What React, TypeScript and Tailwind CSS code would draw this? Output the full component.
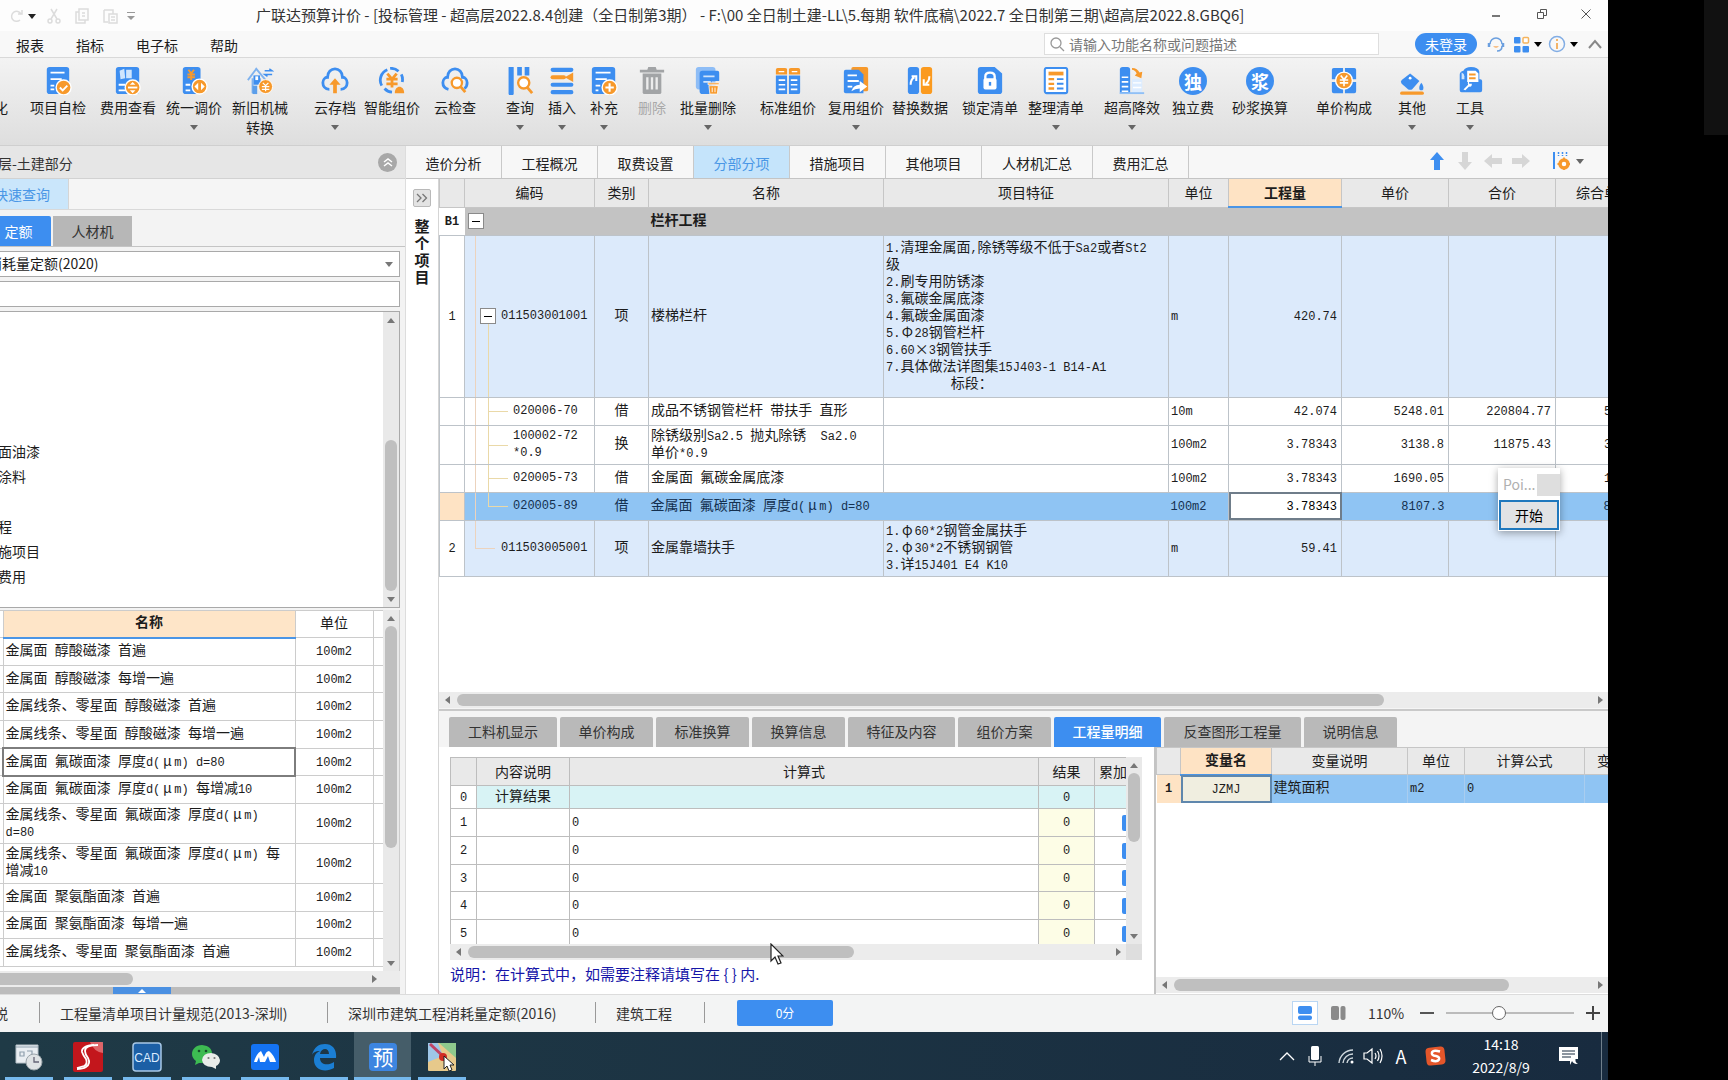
import React from "react";
import { clsx } from "clsx";

const B = "#3d8ef0";
const O = "#f7992b";

/* ---------- shared text and scroll bar pieces ---------- */

function Mixed({ text }: { text: string }) {
  const parts = text.split(/([\x20-\x7e]+|[μφΦ])/).filter(Boolean);
  return (
    <>
      {parts.map((p, i) =>
        /^[μφΦ]/.test(p) ? (
          <span key={i} className="inline-block w-3.5 text-center">
            {p}
          </span>
        ) : /^[\x20-\x7e]/.test(p) ? (
          <span key={i} className="font-['Liberation_Mono',monospace] text-xs leading-none">
            {p}
          </span>
        ) : (
          p
        ),
      )}
    </>
  );
}

function Tri({ dir, className }: { dir: "up" | "down" | "left" | "right"; className?: string }) {
  const d = {
    up: "M0 7 4 2l4 5z",
    down: "M0 2l4 5 4-5z",
    left: "M7 0 2 4l5 4z",
    right: "M2 0l5 4-5 4z",
  }[dir];
  return (
    <svg viewBox="0 0 8 8" className={clsx("size-2 shrink-0", className)} fill="currentColor" aria-hidden="true">
      <path d={d} />
    </svg>
  );
}

function HBar({ thumb, className }: { thumb: string; className?: string }) {
  return (
    <div className={clsx("flex h-4 shrink-0 items-center gap-1 bg-[#ececec] px-1 text-[#777]", className)}>
      <Tri dir="left" />
      <div className="flex h-full flex-1 items-center px-0.5">
        <div className={clsx("h-3 rounded-full bg-[#bfbfbf]", thumb)} />
      </div>
      <Tri dir="right" />
    </div>
  );
}

function VBar({ thumb, className }: { thumb: string; className?: string }) {
  return (
    <div className={clsx("flex shrink-0 flex-col items-center bg-[#e9e9e9] py-1 text-[#777]", className)}>
      <Tri dir="up" />
      <div className="flex w-full flex-1 flex-col items-center py-1">
        <div className={clsx("w-3 rounded-full bg-[#bfbfbf]", thumb)} />
      </div>
      <Tri dir="down" />
    </div>
  );
}

/* ---------- ribbon icons ---------- */

const icons: Record<string, React.ReactNode> = {
  check: (
    <>
      <rect x="2" y="0" width="24" height="29" rx="3" fill={B} />
      <path d="M6 6h15M6 13h12M6 20h4M6 24h4" stroke="#fff" strokeWidth="2" />
      <circle cx="20" cy="22" r="8" fill={O} stroke="#fff" strokeWidth="1.5" />
      <path d="M16 22l3 3 5-5" stroke="#fff" strokeWidth="2" fill="none" />
    </>
  ),
  fee: (
    <>
      <rect x="1" y="0" width="25" height="29" rx="3" fill={B} />
      <path d="M5 4l5-2 1 10-5 1zM12 3h6v9h-6z" fill="#cfe5fd" />
      <path d="M4 19h7M4 25h7" stroke="#fff" strokeWidth="2" />
      <circle cx="19" cy="22" r="8" fill={O} stroke="#fff" strokeWidth="1.5" />
      <path d="M14 22h10" stroke="#fff" strokeWidth="2" />
      <path d="M16 19l3-3 3 3zM16 25l3 3 3-3z" fill="#fff" />
    </>
  ),
  price: (
    <>
      <rect x="2" y="0" width="19" height="29" rx="3" fill={B} />
      <path d="M8 3l3 4 3-4M7 8h8M7 11h8M11 7v7" stroke={O} strokeWidth="2" fill="none" />
      <path d="M5 19h5M5 25h5" stroke="#fff" strokeWidth="2" />
      <circle cx="20" cy="21" r="8" fill={O} stroke="#fff" strokeWidth="1.5" />
      <path d="M18.500 17v8l-4-4zM21.500 17v8l4-4z" fill="#fff" />
    </>
  ),
  machine: (
    <>
      <path d="M1 14L10 2l10 12M6 12v16M14 12v6" stroke="#7fb2ee" strokeWidth="2" fill="none" />
      <path d="M7 9h7v10H7z" fill={B} />
      <path d="M9 10h3v4H9z" fill="#fff" />
      <path d="M6 20h5v9H6z" fill="#5b9eea" />
      <path d="M19 4h8l-3-2M27 8h-8l3 2" stroke={B} strokeWidth="1.500" fill="none" />
      <circle cx="20" cy="21" r="7.500" fill={O} stroke="#fff" strokeWidth="1" />
      <path d="M17 17l3 3 3-3M16 21h8M16 24h8M20 20v6" stroke="#fff" strokeWidth="1.300" fill="none" />
    </>
  ),
  cloudUp: (
    <>
      <path d="M8 24C3 24 1 20 1 17s2-6 5-6C6 5 10 2 14 2s8 3 8 9c3 0 5 3 5 6s-2 7-7 7" stroke={B} strokeWidth="3" fill="none" />
      <path d="M14 12l6 7h-4v9h-4v-9H8z" fill={O} />
    </>
  ),
  smart: (
    <>
      <path d="M9 3a12 12 0 0 0-6 17M12 1.500a12 12 0 0 1 9 3M24 8a12 12 0 0 1 1 8M6 23a12 12 0 0 0 8 4" stroke={B} strokeWidth="3" fill="none" />
      <path d="M9 7l5 6 5-6M8 13h12M8 18h12M14 12v10" stroke={O} strokeWidth="3" fill="none" />
      <path d="M17 28c0-9 10-9 10 0z" fill={O} />
    </>
  ),
  cloudFind: (
    <>
      <path d="M7 24C3 23 1 20 1 17s2-6 5-6C6 5 10 2 14 2s8 3 8 9c3 0 5 3 5 6 0 2-1 5-3 6" stroke={B} strokeWidth="3" fill="none" />
      <circle cx="16" cy="17" r="5.500" fill="#fff" stroke={O} strokeWidth="2.500" />
      <path d="M20 21l5 6" stroke={O} strokeWidth="3" />
    </>
  ),
  query: (
    <>
      <path d="M4.500 1v27" stroke={B} strokeWidth="5.500" strokeLinecap="round" />
      <path d="M11 0h5v9h-5zM19 0h5v9h-5z" fill={B} />
      <circle cx="18" cy="17" r="6" fill="#fff" stroke={O} strokeWidth="2.500" />
      <path d="M22 22l5 6" stroke={O} strokeWidth="3" />
    </>
  ),
  insert: (
    <>
      <path d="M4 3h20M4 19h20M4 27h20" stroke={B} strokeWidth="4.500" strokeLinecap="round" />
      <path d="M4 11h12" stroke={O} strokeWidth="4.500" strokeLinecap="round" />
      <path d="M17 11l9-5v10z" fill={O} />
    </>
  ),
  supplement: (
    <>
      <rect x="1" y="0" width="25" height="29" rx="3" fill={B} />
      <path d="M5 6h16M5 13h12M5 20h5M5 25h3" stroke="#fff" strokeWidth="2" />
      <circle cx="20" cy="22" r="8" fill={O} stroke="#fff" strokeWidth="1.500" />
      <path d="M15.500 22h9M20 17.500v9" stroke="#fff" strokeWidth="2.200" />
    </>
  ),
  trash: (
    <>
      <path d="M1 3h8l1-3h8l1 3h8v3H1z" fill="#a2a4a6" />
      <path d="M4 7h20v20q0 2-2 2H6q-2 0-2-2z" fill="#a2a4a6" />
      <path d="M9 11v13M14 11v13M19 11v13" stroke="#ececec" strokeWidth="2.500" />
    </>
  ),
  batch: (
    <>
      <rect x="1" y="0" width="21" height="24" rx="3" fill="#8ebdf6" />
      <path d="M8 4h16q2 0 2 2v9h-8v14H8q-3 0-3-3V7q0-3 3-3z" fill={B} />
      <path d="M9 10h12M9 16h8" stroke="#cfe3fb" strokeWidth="2" />
      <path d="M14 17h12v2H14zM15 20h10l-1 9h-8z" fill={O} stroke="#fff" strokeWidth="0.800" />
      <path d="M18.500 22v5M21.500 22v5" stroke="#fff" strokeWidth="1" />
    </>
  ),
  standard: (
    <>
      <path d="M1 8V3q0-2 2-2h8l2 1v6zM15 8V2l2-1h8q2 0 2 2v5z" fill={O} />
      <path d="M4 5h6M18 5h6" stroke="#fff" strokeWidth="1.500" />
      <path d="M1 9h12v20H3q-2 0-2-2zM15 9h12v18q0 2-2 2H15z" fill={B} />
      <path d="M4 14h7M4 19h7M4 24h7M17 14h7M17 19h7M17 24h7" stroke="#fff" strokeWidth="1.800" />
    </>
  ),
  reuse: (
    <>
      <rect x="9" y="0" width="18" height="26" rx="2" fill={O} />
      <path d="M3 3h14l5 5v20H3q-2 0-2-2V5q0-2 2-2z" fill={B} />
      <path d="M5 9h10M5 15h12M5 21h5" stroke="#fff" strokeWidth="2" />
      <path d="M9 26q2-7 9-7v-4l8 6-8 6v-4q-5 0-9 3z" fill="#fff" />
    </>
  ),
  replace: (
    <>
      <rect x="1" y="0" width="12" height="29" rx="3" fill={B} />
      <rect x="15" y="0" width="12" height="29" rx="3" fill="#fb9a1e" />
      <path d="M4 19q0-6 4-8M5 10h5v5M24 10q0 6-4 8M18 13v6h6" stroke="#fff" strokeWidth="2.200" fill="none" />
    </>
  ),
  lock: (
    <>
      <path d="M4 0h15l8 7v19q0 3-3 3H4q-3 0-3-3V3q0-3 3-3z" fill={B} />
      <path d="M9 13v-3q0-4 5-4t5 4v3" stroke="#fff" strokeWidth="2.500" fill="none" />
      <rect x="7" y="12" width="14" height="12" rx="2" fill="#fff" />
      <path d="M14 16v4" stroke={B} strokeWidth="2.500" />
    </>
  ),
  arrange: (
    <>
      <rect x="2" y="1" width="24" height="27" rx="2" fill="#fff" stroke={B} strokeWidth="2.200" />
      <path d="M6 5h16v4H6z" fill={O} />
      <path d="M6 13h6M6 18h6M6 23h6" stroke={O} strokeWidth="2.500" />
      <path d="M15 13h7M15 18h7M15 23h7" stroke={B} strokeWidth="2" />
    </>
  ),
  tall: (
    <>
      <path d="M1 29V3q0-3 3-3h5q3 0 3 3v26z" fill={B} />
      <path d="M3 11h7M3 16h7M3 21h7M3 26h7" stroke="#fff" strokeWidth="1.800" />
      <path d="M14 13h11v14H14z" fill="#dcecff" />
      <path d="M15 17h9M15 22h9" stroke="#fff" strokeWidth="1.500" />
      <path d="M1 28h26" stroke="#8fc0f7" strokeWidth="2" />
      <path d="M14 1q6 0 8 5l3-1-1 7-7-3 2-2q-2-4-5-4z" fill={O} />
    </>
  ),
  compose: (
    <>
      <path d="M3 1h10v12H1V3q0-2 2-2zM15 1h10q2 0 2 2v10H15zM1 16h12v12H3q-2 0-2-2zM15 16h12v10q0 2-2 2H15z" fill={B} />
      <circle cx="14" cy="14.500" r="9" fill={O} stroke="#fff" strokeWidth="1.500" />
      <path d="M10.500 9l3.500 4.500L17.500 9M9.500 14h9M9.500 17h9M14 13.500v7" stroke="#fff" strokeWidth="1.700" fill="none" />
    </>
  ),
  other: (
    <>
      <path d="M12 7l10 8-8 9q-2 1-4 0L3 18q-2-2 0-4z" fill={B} />
      <circle cx="12" cy="12" r="1.500" fill="#fff" />
      <path d="M24 17q3 4 2 7-2 2-4 0-1-3 2-7z" fill={B} />
      <path d="M3 28h22" stroke={O} strokeWidth="3.500" strokeLinecap="round" />
    </>
  ),
  tool: (
    <>
      <path d="M5 27q-2 0-2-2V8q0-3 4-4 2-4 8-4 8 0 9 5v8h1q2 0 2 2v10q0 2-2 2z" fill={B} />
      <path d="M11 4h9l3 3v9H11z" fill="#fff" />
      <path d="M13 8h7M13 12h7" stroke={O} strokeWidth="2" />
      <path d="M5 6q3 1 3 4v3H5z" fill="#cfe5fd" />
      <path d="M7 24l5-5q-1-3 1-4v3h3q0 4-3 3l-4 4z" fill="#fff" />
    </>
  ),
};

type Tool = { label: string[]; icon: string; cls: string; drop?: boolean; glyph?: string; off?: boolean };

const tools: Tool[] = [
  { label: ["项目自检"], icon: "check", cls: "ml-5 w-[60px]" },
  { label: ["费用查看"], icon: "fee", cls: "ml-2.5 w-[60px]" },
  { label: ["统一调价"], icon: "price", cls: "ml-1.5 w-[60px]", drop: true },
  { label: ["新旧机械", "转换"], icon: "machine", cls: "ml-1.5 w-[60px]" },
  { label: ["云存档"], icon: "cloudUp", cls: "ml-[22px] w-[46px]", drop: true },
  { label: ["智能组价"], icon: "smart", cls: "ml-1 w-[60px]" },
  { label: ["云检查"], icon: "cloudFind", cls: "ml-2.5 w-[46px]" },
  { label: ["查询"], icon: "query", cls: "ml-[26px] w-8", drop: true },
  { label: ["插入"], icon: "insert", cls: "ml-2.5 w-8", drop: true },
  { label: ["补充"], icon: "supplement", cls: "ml-2.5 w-8", drop: true },
  { label: ["删除"], icon: "trash", cls: "ml-4 w-8", off: true },
  { label: ["批量删除"], icon: "batch", cls: "ml-2.5 w-[60px]", drop: true },
  { label: ["标准组价"], icon: "standard", cls: "ml-5 w-[60px]" },
  { label: ["复用组价"], icon: "reuse", cls: "ml-2 w-[60px]", drop: true },
  { label: ["替换数据"], icon: "replace", cls: "ml-1 w-[60px]" },
  { label: ["锁定清单"], icon: "lock", cls: "ml-2.5 w-[60px]" },
  { label: ["整理清单"], icon: "arrange", cls: "ml-1.5 w-[60px]", drop: true },
  { label: ["超高降效"], icon: "tall", cls: "ml-4 w-[60px]", drop: true },
  { label: ["独立费"], icon: "", glyph: "独", cls: "ml-2 w-[46px]" },
  { label: ["砂浆换算"], icon: "", glyph: "浆", cls: "ml-3.5 w-[60px]" },
  { label: ["单价构成"], icon: "compose", cls: "ml-6 w-[60px]" },
  { label: ["其他"], icon: "other", cls: "ml-[22px] w-8", drop: true },
  { label: ["工具"], icon: "tool", cls: "ml-[26px] w-8", drop: true },
];

function Ribbon() {
  return (
    <div className="flex h-[88px] shrink-0 overflow-hidden border-b border-[#cfcfcf] bg-linear-to-b from-[#f3f3f3] to-[#dedede] pt-[9px]">
      <div className="mt-[30px] flex w-2 shrink-0 justify-end overflow-hidden text-sm leading-5 whitespace-nowrap">化</div>
      {tools.map((t) => (
        <button
          key={t.label[0]}
          type="button"
          disabled={t.off}
          className={clsx("flex shrink-0 flex-col items-center text-sm leading-5 whitespace-nowrap disabled:text-[#a9a9a9]", t.cls)}
        >
          {t.glyph ? (
            <span className="flex size-7 shrink-0 items-center justify-center rounded-full bg-[#3d8ef0] text-lg leading-none font-bold text-white">
              {t.glyph}
            </span>
          ) : (
            <svg viewBox="0 0 28 30" className="h-7 w-7 shrink-0" aria-hidden="true">
              {icons[t.icon]}
            </svg>
          )}
          <span className="mt-0.5">
            {t.label.map((l) => (
              <span key={l} className="block">
                {l}
              </span>
            ))}
          </span>
          {t.drop && <Tri dir="down" className="mt-1.5 text-[#666]" />}
        </button>
      ))}
    </div>
  );
}

/* ---------- window title and menu ---------- */

function TitleBar() {
  return (
    <header className="flex h-[31px] shrink-0 items-center bg-[#fdfdfd]">
      <div className="flex w-64 shrink-0 items-center pl-2 text-[#dcdcdc]">
        <svg viewBox="0 0 16 16" className="size-4" fill="none" stroke="currentColor" strokeWidth="1.500">
          <path d="M12 12a5 5 0 1 1 1-6M14 2v4h-4" />
        </svg>
        <Tri dir="down" className="ml-1 text-[#222]" />
        <svg viewBox="0 0 16 16" className="ml-2.5 size-4" fill="none" stroke="currentColor" strokeWidth="1.500">
          <circle cx="4" cy="13" r="2" />
          <circle cx="12" cy="13" r="2" />
          <path d="M5 11l6-10M11 11L5 1" />
        </svg>
        <svg viewBox="0 0 16 16" className="ml-3 size-4" fill="none" stroke="currentColor" strokeWidth="1.500">
          <path d="M5 1h9v11H5zM5 4H2v11h9v-3M8 5h3M8 8h3" />
        </svg>
        <svg viewBox="0 0 16 16" className="ml-3 size-4" fill="none" stroke="currentColor" strokeWidth="1.500">
          <path d="M2 2h9v4M2 2v12h4M7 6h8v9H7zM9 9h4M9 12h4" />
        </svg>
        <svg viewBox="0 0 10 10" className="ml-2 size-2.5" fill="#999">
          <path d="M1 1h8v1H1zM1 5h8L5 9z" />
        </svg>
      </div>
      <h1 className="text-[15px] whitespace-pre text-[#333]">
        广联达预算计价 - [投标管理 - 超高层2022.8.4创建（全日制第3期） - F:\00 全日制土建-LL\5.每期 软件底稿\2022.7 全日制第三期\超高层2022.8.GBQ6]
      </h1>
      <div className="ml-auto flex items-center pr-4 pb-1 text-[#555]">
        <button type="button" aria-label="最小化" className="mt-1 h-0.5 w-2 bg-[#777]" />
        <button type="button" aria-label="还原" className="ml-9">
          <svg viewBox="0 0 12 12" className="size-3" fill="none" stroke="currentColor">
            <path d="M1.500 4.500h6v6h-6zM4.500 4.500v-3h6v6h-3" />
          </svg>
        </button>
        <button type="button" aria-label="关闭" className="ml-8">
          <svg viewBox="0 0 12 12" className="size-3" fill="none" stroke="currentColor">
            <path d="M1.500 1.500l9 9M10.500 1.500l-9 9" />
          </svg>
        </button>
      </div>
    </header>
  );
}

function MenuBar() {
  return (
    <nav className="flex h-[27px] shrink-0 items-center border-b border-[#d9d9d9] bg-[#f8f8f8] text-sm">
      <div className="flex gap-8 pt-0.5 pl-4">
        {["报表", "指标", "电子标", "帮助"].map((m) => (
          <button key={m} type="button" className="leading-5 whitespace-nowrap">
            {m}
          </button>
        ))}
      </div>
      <label className="ml-auto flex h-[22px] w-[335px] items-center border border-[#dedede] bg-white px-1">
        <svg viewBox="0 0 16 16" className="size-4 shrink-0" fill="none" stroke="#999" strokeWidth="1.300">
          <circle cx="7" cy="7" r="5" />
          <path d="M11 11l4 4" />
        </svg>
        <input
          aria-label="搜索功能"
          placeholder="请输入功能名称或问题描述"
          className="ml-1 w-full bg-transparent text-sm leading-5 outline-none placeholder:text-[#777]"
        />
      </label>
      <button type="button" className="ml-9 h-[22px] w-[62px] rounded-full bg-[#3d8ef0] text-sm leading-5 text-white">
        未登录
      </button>
      <svg viewBox="0 0 18 18" className="ml-2.5 size-[18px]" fill="none" stroke="#6b9fdf" strokeWidth="1.500">
        <path d="M3 9a6 6 0 0 1 12 0M15 11q0 5-5 5" />
        <path d="M2 8v4M16 8v4" strokeWidth="2.500" />
        <path d="M6 11h6q-3 4-6 0z" fill="#f8c18a" stroke="none" />
      </svg>
      <svg viewBox="0 0 17 17" className="ml-2 size-[17px]" fill={B}>
        <rect x="1" y="1" width="6.500" height="6.500" rx="1" />
        <rect x="10" y="1.500" width="5.500" height="5.500" rx="1" fill="#fff" stroke="#f5b45e" strokeWidth="1.500" />
        <rect x="1" y="10" width="6.500" height="6.500" rx="1" />
        <rect x="9.500" y="10" width="6.500" height="6.500" rx="1" />
      </svg>
      <Tri dir="down" className="ml-1 text-black" />
      <svg viewBox="0 0 18 18" className="ml-1.5 size-[18px]" fill="none" stroke="#82ade4" strokeWidth="1.500">
        <circle cx="9" cy="9" r="7.500" />
        <path d="M9 4v2M9 8v6" stroke="#f3b469" strokeWidth="2" />
      </svg>
      <Tri dir="down" className="ml-1 text-black" />
      <svg viewBox="0 0 14 10" className="mr-1.5 ml-2.5 h-2.5 w-3.5" fill="none" stroke="#888" strokeWidth="2">
        <path d="M1 9l6-7 6 7" />
      </svg>
    </nav>
  );
}

/* ---------- left quota browser ---------- */

const quotaRows: [string, string][] = [
  ["金属面 醇酸磁漆 首遍", "h-[27px]"],
  ["金属面 醇酸磁漆 每增一遍", "h-[27px]"],
  ["金属线条、零星面 醇酸磁漆 首遍", "h-[27px]"],
  ["金属线条、零星面 醇酸磁漆 每增一遍", "h-[27px]"],
  ["金属面 氟碳面漆 厚度d(μm) d=80", "h-[27px]"],
  ["金属面 氟碳面漆 厚度d(μm) 每增减10", "h-[27px]"],
  ["金属线条、零星面 氟碳面漆 厚度d(μm)\nd=80", "h-[39px]"],
  ["金属线条、零星面 氟碳面漆 厚度d(μm) 每\n增减10", "h-[39px]"],
  ["金属面 聚氨酯面漆 首遍", "h-[27px]"],
  ["金属面 聚氨酯面漆 每增一遍", "h-[27px]"],
  ["金属线条、零星面 聚氨酯面漆 首遍", "h-[27px]"],
];

function LeftPanel() {
  const tree = ["", "", "", "", "", "面油漆", "涂料", "", "程", "施项目", "费用"];
  return (
    <aside className="flex w-[406px] shrink-0 flex-col border-r border-[#ddd] bg-[#f3f3f3]">
      <div className="flex h-[33px] shrink-0 items-center justify-between border-b border-[#d2d2d2] bg-[#e6e6e6] pr-2">
        <div className="overflow-hidden">
          <span className="-ml-0.5 text-sm whitespace-nowrap text-[#333]">层-土建部分</span>
        </div>
        <button type="button" aria-label="收起" className="flex size-[19px] items-center justify-center rounded-full bg-[#a8a8a8]">
          <svg viewBox="0 0 10 10" className="size-2.5" fill="none" stroke="#fff" strokeWidth="1.500">
            <path d="M1 5l4-3 4 3M1 9l4-3 4 3" />
          </svg>
        </button>
      </div>
      <div className="flex h-[31px] shrink-0 border-b border-[#d9d9d9] bg-[#f5f5f5]">
        <button type="button" className="flex w-[69px] items-center overflow-hidden border-r border-[#d5d5d5] bg-[#cae6fb] text-sm text-[#4a97e6]">
          <span className="-ml-1.5 whitespace-nowrap">快速查询</span>
        </button>
      </div>
      <div className="flex h-[37px] shrink-0 items-end gap-0.5 border-b border-[#c4c4c4] text-sm">
        <button type="button" className="h-[30px] w-[51px] rounded-tr-xs bg-[#3d8ef0] pr-3.5 text-sm text-white">
          定额
        </button>
        <button type="button" className="h-[30px] w-[79px] bg-[#b7b7b7] text-sm text-[#333]">
          人材机
        </button>
      </div>
      <div className="flex min-h-0 flex-1 flex-col pr-[5px]">
        <div className="relative mt-1 h-[26px] shrink-0 overflow-hidden border border-l-0 border-[#a9a9a9] bg-white">
          <select aria-label="定额库" className="-ml-3 block h-full w-full appearance-none bg-transparent pb-0.5 text-sm leading-5 outline-none">
            <option>消耗量定额(2020)</option>
          </select>
          <Tri dir="down" className="pointer-events-none absolute top-2 right-1.5 text-[#777]" />
        </div>
        <input aria-label="查询条件" className="mt-1 h-[26px] shrink-0 border border-l-0 border-[#a9a9a9] bg-white px-2 text-sm outline-none" />
        <div className="mt-1 flex h-[297px] shrink-0 border border-l-0 border-[#a9a9a9] bg-white">
          <ul className="flex-1 overflow-hidden pt-px text-sm">
            {tree.map((t, i) => (
              <li key={i} className="flex h-[25px] items-center">
                <span className="-ml-0.5">{t}</span>
              </li>
            ))}
          </ul>
          <VBar thumb="mt-auto h-[151px]" className="w-4" />
        </div>
        <div className="mt-0.5 flex h-[361px] shrink-0 border-r border-[#ccc] bg-white">
          <div className="min-w-0 flex-1 overflow-hidden">
            <table className="h-[357px] w-full table-fixed border-collapse text-sm leading-[17px] [&_td]:pb-1 [&_th]:pb-1">
              <colgroup>
                <col className="w-[3px]" />
                <col />
                <col className="w-[78px]" />
                <col className="w-2.5" />
              </colgroup>
              <thead>
                <tr className="h-[27px]">
                  <td className="border border-l-0 border-[#ccc]" />
                  <th className="border border-b-2 border-[#ccc] border-b-[#4a95e6] bg-[#fee5c8] font-bold">名称</th>
                  <th className="border border-[#ccc] font-normal">单位</th>
                  <td className="border border-r-0 border-[#ccc]" />
                </tr>
              </thead>
              <tbody>
                {quotaRows.map(([name, h], i) => (
                  <tr key={name} className={h}>
                    <td className="border border-l-0 border-[#ccc]" />
                    <td
                      className={clsx(
                        "border border-[#ccc] pl-0.5 whitespace-pre",
                        i === 4 && "outline-2 -outline-offset-1 outline-[#7d7d7d]",
                      )}
                    >
                      <Mixed text={name} />
                    </td>
                    <td className="border border-[#ccc] text-center">
                      <Mixed text="100m2" />
                    </td>
                    <td className="border border-r-0 border-[#ccc]" />
                  </tr>
                ))}
              </tbody>
            </table>
          </div>
          <VBar thumb="h-[222px]" className="w-4" />
        </div>
        <div className="flex h-4 shrink-0 items-center bg-[#ececec] pr-[22px] text-[#777]">
          <div className="h-3 w-[133px] rounded-r-full bg-[#bfbfbf]" />
          <Tri dir="right" className="ml-auto" />
        </div>
        <div className="h-[7px] shrink-0 bg-[#bcbcbc]">
          <button type="button" aria-label="展开" className="ml-[113px] flex h-[7px] w-[58px] items-center justify-center bg-[#4a90e2]">
            <svg viewBox="0 0 8 4" className="h-1 w-2" fill="#fff">
              <path d="M0 4l4-4 4 4z" />
            </svg>
          </button>
        </div>
      </div>
    </aside>
  );
}

/* ---------- bill of quantities ---------- */

type Row = {
  no: string;
  code: string;
  kind: string;
  name: string;
  feature?: string;
  unit: string;
  qty: string;
  price?: string;
  total?: string;
  comp?: string;
  h: string;
  tone: "item" | "sub" | "active";
};

const rows: Row[] = [
  {
    no: "1",
    code: "011503001001",
    kind: "项",
    name: "楼梯栏杆",
    feature:
      "1.清理金属面,除锈等级不低于Sa2或者St2\n级\n2.刷专用防锈漆\n3.氟碳金属底漆\n4.氟碳金属面漆\n5.Φ28钢管栏杆\n6.60×3钢管扶手\n7.具体做法详图集15J403-1 B14-A1\n         标段：",
    unit: "m",
    qty: "420.74",
    h: "h-[162px]",
    tone: "item",
  },
  { no: "", code: "020006-70", kind: "借", name: "成品不锈钢管栏杆 带扶手 直形", unit: "10m", qty: "42.074", price: "5248.01", total: "220804.77", comp: "5", h: "h-7", tone: "sub" },
  { no: "", code: "100002-72\n*0.9", kind: "换", name: "除锈级别Sa2.5 抛丸除锈  Sa2.0\n单价*0.9", unit: "100m2", qty: "3.78343", price: "3138.8", total: "11875.43", comp: "3", h: "h-[39px]", tone: "sub" },
  { no: "", code: "020005-73", kind: "借", name: "金属面 氟碳金属底漆", unit: "100m2", qty: "3.78343", price: "1690.05", total: "", comp: "1", h: "h-7", tone: "sub" },
  { no: "", code: "020005-89", kind: "借", name: "金属面 氟碳面漆 厚度d(μm) d=80", unit: "100m2", qty: "3.78343", price: "8107.3", total: "", comp: "8", h: "h-7", tone: "active" },
  { no: "2", code: "011503005001", kind: "项", name: "金属靠墙扶手", feature: "1.φ60*2钢管金属扶手\n2.φ30*2不锈钢钢管\n3.详15J401 E4 K10", unit: "m", qty: "59.41", h: "h-14", tone: "item" },
];

function Fold({ className }: { className?: string }) {
  return (
    <button
      type="button"
      aria-label="折叠"
      className={clsx("flex size-4 shrink-0 items-center justify-center border border-[#8a8a8a] bg-white", className)}
    >
      <span className="h-px w-2 bg-black" />
    </button>
  );
}

function BillTable() {
  const cell = "border border-[#bdc3c9]";
  const plain = "border-b border-[#bdc3c9]";
  return (
    <div className="min-h-0 flex-1 overflow-hidden bg-white">
      <table className="w-[1228px] table-fixed border-collapse text-sm leading-[17px] [&_td:not(:nth-child(2))]:pb-1">
        <colgroup>
          <col className="w-[25px]" />
          <col className="w-[130px]" />
          <col className="w-[54px]" />
          <col className="w-[235px]" />
          <col className="w-[285px]" />
          <col className="w-[60px]" />
          <col className="w-[113px]" />
          <col className="w-[107px]" />
          <col className="w-[107px]" />
          <col className="w-[112px]" />
        </colgroup>
        <thead className="bg-[#e9e9e9]">
          <tr className="h-7">
            {["", "编码", "类别", "名称", "项目特征", "单位", "工程量", "单价", "合价"].map((h) => (
              <th
                key={h}
                scope="col"
                className={clsx(
                  "border border-t-0 border-[#c6c6c6]",
                  h === "工程量" ? "border-b-2 border-b-[#4a95e6] bg-[#fee3c4] font-bold" : "font-normal",
                )}
              >
                {h}
              </th>
            ))}
            <th scope="col" className="border border-t-0 border-[#c6c6c6] pl-5 text-left font-normal">
              综合单价
            </th>
          </tr>
        </thead>
        <tbody>
          <tr className="h-7 bg-[#c3c3c3] font-bold">
            <td className="bg-white text-center">
              <Mixed text="B1" />
            </td>
            <td className="pl-[3px]">
              <Fold />
            </td>
            <td />
            <td className="pl-0.5">栏杆工程</td>
            <td colSpan={6} />
          </tr>
          {rows.map((r) => {
            const active = r.tone === "active";
            const edge = active ? plain : cell;
            return (
              <tr key={r.code} className={clsx(r.h, r.tone === "item" && "bg-[#dceafb]", active && "bg-[#8fc4f3] text-[#14304f]")}>
                <td className={clsx(cell, "text-center", active ? "bg-[#fee3c4]" : "bg-white")}>
                  <Mixed text={r.no} />
                </td>
                <td className={clsx(edge, "relative")}>
                  <div className={clsx("absolute top-0 left-2.5 w-px bg-[#ecd3bd]", r.no === "2" ? "h-1/2" : "h-full")} />
                  {r.no !== "2" && (
                    <div
                      className={clsx(
                        "absolute left-[23px] w-px bg-[#ead9a8]",
                        r.no === "1" ? "top-1/2 h-1/2" : active ? "top-0 h-1/2" : "top-0 h-full",
                      )}
                    />
                  )}
                  {r.no === "" && <div className="absolute top-1/2 left-[23px] h-px w-5 bg-[#ead9a8]" />}
                  {r.no === "2" && <div className="absolute top-1/2 left-2.5 h-px w-5 bg-[#ecd3bd]" />}
                  <div className={clsx("relative flex items-center whitespace-pre", r.no === "1" ? "pl-[15px]" : r.no === "2" ? "pl-9" : "pl-12")}>
                    {r.no === "1" && <Fold className="mr-[5px]" />}
                    <span className="font-['Liberation_Mono',monospace] text-xs leading-[17px]">{r.code}</span>
                  </div>
                </td>
                <td className={clsx(edge, "text-center")}>{r.kind}</td>
                <td className={clsx(edge, "pl-0.5 whitespace-pre")}>
                  <Mixed text={r.name} />
                </td>
                <td className={clsx(edge, "overflow-hidden pl-0.5 whitespace-pre")}>
                  <Mixed text={r.feature ?? ""} />
                </td>
                <td className={clsx(edge, "pl-0.5")}>
                  <Mixed text={r.unit} />
                </td>
                <td
                  className={clsx(
                    cell,
                    "pr-1 text-right",
                    active && "bg-white text-black outline-2 -outline-offset-2 outline-[#6f7d8a]",
                  )}
                >
                  <Mixed text={r.qty} />
                </td>
                {[r.price, r.total].map((v, i) => (
                  <td key={i} className={clsx(edge, "pr-1 text-right")}>
                    <Mixed text={v ?? ""} />
                  </td>
                ))}
                <td className={clsx(edge, "pl-12")}>
                  <Mixed text={r.comp ?? ""} />
                </td>
              </tr>
            );
          })}
        </tbody>
      </table>
    </div>
  );
}

/* ---------- lower detail pane ---------- */

const detailTabs: [string, string][] = [
  ["工料机显示", "w-[108px]"],
  ["单价构成", "w-[93px]"],
  ["标准换算", "w-[93px]"],
  ["换算信息", "w-[93px]"],
  ["特征及内容", "w-[107px]"],
  ["组价方案", "w-[93px]"],
  ["工程量明细", "w-[107px]"],
  ["反查图形工程量", "w-[137px]"],
  ["说明信息", "w-[93px]"],
];

function CalcTable() {
  const c = "border border-[#bdbdbd]";
  return (
    <div className="flex h-[187px] overflow-hidden">
      <div className="relative min-w-0 flex-1 overflow-hidden">
        <table className="w-[calc(100%+39px)] table-fixed border-collapse text-sm leading-[17px] [&_td]:pb-1">
          <colgroup>
            <col className="w-[26px]" />
            <col className="w-[93px]" />
            <col />
            <col className="w-14" />
            <col className="w-[70px]" />
          </colgroup>
          <thead className="bg-[#e9e9e9]">
            <tr className="h-7">
              {["", "内容说明", "计算式", "结果"].map((h) => (
                <th key={h} scope="col" className={clsx(c, "font-normal")}>
                  {h}
                </th>
              ))}
              <th scope="col" className={clsx(c, "pl-1 text-left font-normal")}>
                累加
              </th>
            </tr>
          </thead>
          <tbody>
            <tr className="h-[23px] bg-[#d8f3f5]">
              <td className={clsx(c, "bg-white text-center")}>
                <Mixed text="0" />
              </td>
              <td className={clsx(c, "text-center")}>计算结果</td>
              <td className={c} />
              <td className={clsx(c, "text-center")}>
                <Mixed text="0" />
              </td>
              <td className={c} />
            </tr>
            {["1", "2", "3", "4", "5"].map((n) => (
              <tr key={n} className={n === "3" ? "h-[27px]" : "h-7"}>
                <td className={clsx(c, "text-center")}>
                  <Mixed text={n} />
                </td>
                <td className={c} />
                <td className={clsx(c, "pl-0.5")}>
                  <Mixed text="0" />
                </td>
                <td className={clsx(c, "bg-[#fdfde6] text-center")}>
                  <Mixed text="0" />
                </td>
                <td className={clsx(c, "pt-1")}>
                  <input
                    type="checkbox"
                    defaultChecked
                    aria-label={"累加 " + n}
                    className="mx-auto block size-4 appearance-none rounded-xs bg-[radial-gradient(circle,#fff_3px,#3d8ef0_4px)]"
                  />
                </td>
              </tr>
            ))}
          </tbody>
        </table>
      </div>
      <VBar thumb="h-[69px]" className="w-4" />
    </div>
  );
}

function VarTable() {
  const c = "border-r border-[#a9cdef]";
  return (
    <div className="min-h-0 flex-1 overflow-hidden">
      <table className="w-[493px] table-fixed border-collapse text-sm leading-[17px] [&_td]:pb-1 [&_th]:pb-0.5">
        <colgroup>
          <col className="w-6" />
          <col className="w-[91px]" />
          <col className="w-[136px]" />
          <col className="w-[57px]" />
          <col className="w-[120px]" />
          <col className="w-[65px]" />
        </colgroup>
        <thead className="bg-[#e9e9e9]">
          <tr className="h-[27px]">
            {["", "变量名", "变量说明", "单位", "计算公式"].map((h) => (
              <th
                key={h}
                scope="col"
                className={clsx("border border-[#c6c6c6]", h === "变量名" ? "border-b-2 border-b-[#4a95e6] bg-[#fee3c4] font-bold" : "font-normal")}
              >
                {h}
              </th>
            ))}
            <th scope="col" className="border border-[#c6c6c6] pl-3 text-left font-normal">
              变
            </th>
          </tr>
        </thead>
        <tbody>
          <tr className="h-7 bg-[#8fc4f3]">
            <td className="bg-[#fee3c4] text-center font-bold">
              <Mixed text="1" />
            </td>
            <td className="bg-[#f0eee0] text-center outline-2 -outline-offset-2 outline-[#5f87ad]">
              <Mixed text="JZMJ" />
            </td>
            <td className={clsx(c, "pl-0.5")}>建筑面积</td>
            <td className={clsx(c, "pl-0.5")}>
              <Mixed text="m2" />
            </td>
            <td className={clsx(c, "pl-0.5")}>
              <Mixed text="0" />
            </td>
            <td />
          </tr>
        </tbody>
      </table>
    </div>
  );
}

function DetailPane() {
  return (
    <section className="relative flex h-[285px] shrink-0 flex-col border-t-2 border-[#c9c9c9] bg-white">
      <div className="flex h-9 shrink-0 items-end gap-[3px] overflow-hidden bg-[#f4f4f4] pl-2.5">
        {detailTabs.map(([t, w]) => (
          <button
            key={t}
            type="button"
            className={clsx(
              "h-[30px] shrink-0 rounded-t-xs pb-0.5 text-sm",
              w,
              t === "工程量明细" ? "bg-[#3d8ef0] font-medium text-white" : "bg-[#b9b9b9] text-[#333]",
            )}
          >
            {t}
          </button>
        ))}
      </div>
      <div className="flex min-h-0 flex-1">
        <div className="flex min-w-0 flex-1 flex-col pt-2.5 pr-3 pl-[11px]">
          <CalcTable />
          <div className="flex">
            <HBar thumb="w-[386px]" className="flex-1" />
            <div className="w-4 bg-[#dedede]" />
          </div>
          <p className="mt-1 text-[15px] leading-5 whitespace-pre text-[#1616a8]">说明：在计算式中，如需要注释请填写在 {"{ }"} 内.</p>
        </div>
        <div className="flex w-[454px] shrink-0 flex-col border-l-2 border-[#c4c4c4]">
          <VarTable />
          <HBar thumb="w-[335px]" className="mb-px" />
        </div>
      </div>
      <svg viewBox="0 0 14 22" className="absolute top-[232px] left-[331px] h-[22px] w-3.5" aria-hidden="true">
        <path d="M1 1v17l4-4 3 7 3-1-3-7h5z" fill="#fff" stroke="#222" strokeWidth="1.200" />
      </svg>
    </section>
  );
}

/* ---------- project tabs ---------- */

function ProjectTabs() {
  const tabs: [string, string][] = [
    ["造价分析", "w-24"],
    ["工程概况", "w-24"],
    ["取费设置", "w-24"],
    ["分部分项", "w-24"],
    ["措施项目", "w-24"],
    ["其他项目", "w-24"],
    ["人材机汇总", "w-[111px]"],
    ["费用汇总", "w-24"],
  ];
  return (
    <div className="flex h-[33px] shrink-0 items-stretch border-b border-[#c4c4c4] bg-[#f7f7f7]">
      {tabs.map(([t, w]) => (
        <button
          key={t}
          type="button"
          className={clsx("shrink-0 border-r border-[#c9c9c9] pt-0.5 text-sm", w, t === "分部分项" ? "bg-[#c5e4fb] text-[#4a97e6]" : "text-[#222]")}
        >
          {t}
        </button>
      ))}
      <div className="ml-auto flex items-center pr-6 pb-0.5">
        {["rotate-0 text-[#3d8ef0]", "rotate-180 text-[#d6d6d6]", "-rotate-90 text-[#d6d6d6]", "rotate-90 text-[#d6d6d6]"].map((c, i) => (
          <button key={i} type="button" aria-label={["上移", "下移", "升级", "降级"][i]} className={clsx("mr-2.5", c)}>
            <svg viewBox="0 0 18 18" className="size-[18px]" fill="currentColor">
              <path d="M9 0l7 8h-4v10H6V8H2z" />
            </svg>
          </button>
        ))}
        <svg viewBox="0 0 18 18" className="ml-3 size-[18px]">
          <path d="M2 0v17" stroke={B} strokeWidth="2" />
          <path d="M6.500 0v4M10.500 0v4M14.500 0v4" stroke={B} strokeWidth="1.500" strokeDasharray="2 1" />
          <circle cx="12" cy="12" r="4" fill="#fff" stroke={O} strokeWidth="3.500" />
          <path d="M12 5.500v13M5.500 12h13" stroke={O} strokeWidth="1.800" strokeDasharray="2.500 8" />
        </svg>
        <Tri dir="down" className="ml-1.5 text-[#666]" />
      </div>
    </div>
  );
}

/* ---------- status bar and task bar ---------- */

function StatusBar() {
  const sep = <span className="h-[21px] w-px bg-[#999]" />;
  return (
    <footer className="flex h-[38px] shrink-0 items-center border-t border-[#dcdcdc] bg-[#f3f4f4] pb-0.5 text-sm whitespace-nowrap text-[#333]">
      <div className="flex w-[39px] overflow-hidden">
        <span className="-ml-1.5">税</span>
      </div>
      {sep}
      <span className="w-[287px] pl-5">工程量清单项目计量规范(2013-深圳)</span>
      {sep}
      <span className="w-[267px] pl-5">深圳市建筑工程消耗量定额(2016)</span>
      {sep}
      <span className="w-[108px] pl-5">建筑工程</span>
      {sep}
      <button type="button" className="ml-8 h-[26px] w-24 rounded-xs bg-[#3d8ef0] text-xs text-white">
        0分
      </button>
      <div className="ml-auto flex items-center pr-2">
        <button type="button" aria-label="上下布局" className="flex h-6 w-[26px] items-center justify-center border border-[#b9d6f3] bg-white">
          <svg viewBox="0 0 16 16" className="size-4" fill={B}>
            <rect x="1" y="1" width="14" height="8" rx="2" />
            <rect x="1" y="10.500" width="14" height="4.500" rx="2" />
          </svg>
        </button>
        <button type="button" aria-label="左右布局" className="ml-3">
          <svg viewBox="0 0 16 16" className="size-4" fill="#8a8a8a">
            <rect x="1" y="1" width="8" height="14" rx="2" />
            <rect x="10.500" y="1" width="5" height="14" rx="2" />
          </svg>
        </button>
        <span className="ml-[22px] w-12">110%</span>
        <button type="button" aria-label="缩小" className="ml-1 h-0.5 w-3.5 bg-[#555]" />
        <input
          type="range"
          aria-label="缩放"
          defaultValue={40}
          className="mx-3 h-4 w-[128px] appearance-none bg-[linear-gradient(#bbb,#bbb)] bg-[length:100%_2px] bg-center bg-no-repeat [&::-webkit-slider-thumb]:size-3.5 [&::-webkit-slider-thumb]:appearance-none [&::-webkit-slider-thumb]:rounded-full [&::-webkit-slider-thumb]:border [&::-webkit-slider-thumb]:border-[#666] [&::-webkit-slider-thumb]:bg-white"
        />
        <button type="button" aria-label="放大">
          <svg viewBox="0 0 14 14" className="size-3.5" stroke="#444" strokeWidth="2">
            <path d="M7 0v14M0 7h14" />
          </svg>
        </button>
      </div>
    </footer>
  );
}

const apps: { name: string; node: React.ReactNode }[] = [
  {
    name: "计划任务",
    node: (
      <>
        <path d="M2 3h22v18H2z" fill="#e9eef2" stroke="#b8c2c9" />
        <path d="M2 5h22M6 10h4v4H6zM13 9h5v5" stroke="#8fa0ad" strokeWidth="1.200" fill="none" />
        <circle cx="20" cy="20" r="8" fill="#dfe3e5" stroke="#9aa4aa" />
        <path d="M20 15v5h5" stroke="#667" strokeWidth="1.300" fill="none" />
      </>
    ),
  },
  {
    name: "S",
    node: (
      <>
        <rect width="30" height="30" rx="2" fill="#c3161c" />
        <path d="M17 0h13v11q-9-1-13-11z" fill="#e9888a" opacity="0.700" />
        <path d="M25 3q-13 0-13 6 0 3 3 7 3 6-2 9-3 2-9 2M21 3q-13 1-12 7 1 3 4 7 2 5-2 7l-7 2" stroke="#fff" strokeWidth="1.800" fill="none" />
      </>
    ),
  },
  {
    name: "CAD",
    node: (
      <>
        <rect x="1" y="1" width="28" height="28" rx="3" fill="#1c5fa5" stroke="#a8c8e6" strokeWidth="1.500" />
        <text x="15" y="20" textAnchor="middle" fontSize="12" fontFamily="Liberation Sans, sans-serif" fill="#dcecff">
          CAD
        </text>
      </>
    ),
  },
  {
    name: "微信",
    node: (
      <>
        <path d="M11 3C5 3 1 7 1 12q0 4 4 7l-1 4 4-2q10 1 13-7 1-10-10-11z" fill="#3dbb52" />
        <circle cx="8" cy="9" r="1.300" fill="#17512a" />
        <circle cx="15" cy="9" r="1.300" fill="#17512a" />
        <path d="M20 11q-8 0-9 7 1 7 10 7l4 2v-3q4-2 4-6-1-6-9-7z" fill="#e9ecea" />
        <circle cx="17.500" cy="16" r="1.100" fill="#777" />
        <circle cx="23.500" cy="16" r="1.100" fill="#777" />
      </>
    ),
  },
  {
    name: "会议",
    node: (
      <>
        <rect x="1" y="2" width="28" height="26" rx="3" fill="#1473f3" />
        <path d="M4 20q2-8 7-11l3 6q2-6 5-6 5 4 7 11h-6l-2-6-3 6h-5l-1-5-2 5z" fill="#fff" />
      </>
    ),
  },
  {
    name: "浏览器",
    node: (
      <path
        d="M3 13C5 5 10 2 16 2c8 0 12 6 11 14H11c0 7 8 8 14 4v6c-9 5-20 2-20-8 0-5 3-8 6-9-5 0-7 2-8 4zm8-1h9c0-7-8-6-9 0z"
        fill="#1b7fd4"
      />
    ),
  },
  {
    name: "预算计价",
    node: (
      <>
        <rect x="1" y="1" width="28" height="28" rx="4" fill="#3d85e0" />
        <text x="15" y="22.500" textAnchor="middle" fontSize="21" fontFamily="Noto Sans CJK SC, sans-serif" fill="#fff">
          预
        </text>
      </>
    ),
  },
  {
    name: "指针工具",
    node: (
      <>
        <rect x="1" y="1" width="28" height="28" rx="1" fill="#e7c98b" />
        <path d="M12 1h17v15z" fill="#8fc98d" />
        <path d="M1 1h10l5 13L1 20z" fill="#9ec7e8" />
        <path d="M3 2l14 13" stroke="#c04466" strokeWidth="3" />
        <circle cx="16" cy="15" r="4" fill="#d22b22" />
        <path d="M17 14v13l3-3 2 5 3-1-2-5h4z" fill="#fff" stroke="#222" />
      </>
    ),
  },
];

function TaskBar() {
  return (
    <div className="flex h-12 shrink-0 bg-linear-to-r from-[#1f3a46] to-[#182b3f] text-white">
      <div className="flex gap-0.5">
        {apps.map((a) => (
          <button
            key={a.name}
            type="button"
            aria-label={a.name}
            className={clsx("flex w-[57px] flex-col items-center justify-between pt-2.5", a.name === "预算计价" && "bg-[#455d69]")}
          >
            <svg viewBox="0 0 30 30" className="h-[30px] w-[30px]">
              {a.node}
            </svg>
            <span className={clsx("h-[3px] bg-[#76b9ed]", a.name === "预算计价" ? "w-full" : "w-12")} />
          </button>
        ))}
      </div>
      <div className="ml-auto flex items-center">
        <svg viewBox="0 0 16 16" className="size-4" fill="none" stroke="#fff" strokeWidth="1.300">
          <path d="M1 12l7-7 7 7" />
        </svg>
        <svg viewBox="0 0 16 20" className="ml-3 h-5 w-4">
          <rect x="4" y="0" width="8" height="14" rx="1.500" fill="#fff" />
          <path d="M2 10v6h12v-6M8 16v4" stroke="#fff" fill="none" />
        </svg>
        <svg viewBox="0 0 18 18" className="ml-3.5 size-[18px]" fill="none" stroke="#cfd8dd" strokeWidth="1.400">
          <path d="M2 16A14 14 0 0 1 16 3M6 16A10 10 0 0 1 16 7M10 16a6 6 0 0 1 6-5" />
          <circle cx="15" cy="15" r="1.500" fill="#fff" stroke="none" />
        </svg>
        <svg viewBox="0 0 20 18" className="ml-2 h-[18px] w-5" fill="none" stroke="#fff" strokeWidth="1.200">
          <path d="M1 6h3l5-4v14l-5-4H1zM12 6q2 3 0 6M14.500 4q3 5 0 10M17 2q4 7 0 14" />
        </svg>
        <span className="ml-2.5 w-4 text-center text-lg">A</span>
        <svg viewBox="0 0 22 22" className="ml-4 size-[22px]">
          <rect x="1" y="2" width="19" height="18" rx="4" fill="#e4562a" transform="rotate(-6 11 11)" />
          <path d="M15 6.500q-7-2-8 1-1 3 4 3.500 4 1 3 3.500-2 3-8 .5" stroke="#fff" strokeWidth="2.500" fill="none" />
        </svg>
        <div className="ml-4 w-[76px] text-center text-sm leading-[23px]">
          <div>14:18</div>
          <div>2022/8/9</div>
        </div>
        <svg viewBox="0 0 20 20" className="ml-5 size-5">
          <path d="M0 1h19v12h-5l-3 6v-4H0z" fill="#fff" />
          <path d="M3 5h13M3 8h13M3 11h9" stroke="#1a2d40" strokeWidth="1.200" />
          <path d="M13 12q-1 6 6 6-4-2-2-7z" fill="#fff" />
        </svg>
        <span className="mr-1.5 ml-[22px] h-12 w-px bg-[#6f7f8c]" />
      </div>
    </div>
  );
}

/* ---------- page ---------- */

export default function App() {
  return (
    <div className="flex h-screen overflow-hidden bg-black font-['Noto_Sans_CJK_SC',sans-serif] text-[#1c1c1c]">
      <main className="relative flex min-w-0 flex-1 flex-col overflow-hidden bg-[#f5f5f5]">
        <TitleBar />
        <MenuBar />
        <Ribbon />
        <div className="flex min-h-0 flex-1">
          <LeftPanel />
          <div className="flex min-w-0 flex-1 flex-col">
            <ProjectTabs />
            <div className="flex min-h-0 flex-1">
              <div className="flex w-[33px] shrink-0 flex-col items-center border-r border-[#d5d5d5] bg-white pt-2.5">
                <button type="button" aria-label="展开导航" className="flex h-[18px] w-[18px] items-center justify-center rounded-xs border border-[#b9b9b9] bg-[#e3e3e3]">
                  <svg viewBox="0 0 12 10" className="h-2.5 w-3" fill="none" stroke="#777" strokeWidth="1.300">
                    <path d="M1 1l4 4-4 4M6.500 1l4 4-4 4" />
                  </svg>
                </button>
                <div className="mt-2.5 w-4 text-center text-[15px] leading-[17px] font-bold">整个项目</div>
              </div>
              <div className="flex min-w-0 flex-1 flex-col">
                <BillTable />
                <HBar thumb="w-[927px]" className="mb-px" />
                <DetailPane />
              </div>
            </div>
          </div>
        </div>
        <StatusBar />
        <TaskBar />
        <div role="dialog" aria-label="Pointer" className="absolute top-[468px] right-12 w-[62px] bg-white shadow-[0_2px_8px_rgba(0,0,0,0.35)]">
          <div className="flex h-8 items-center justify-between pl-[5px] text-sm text-[#b0b0b0]">
            Poi...
            <span className="mt-0.5 h-[22px] w-[23px] bg-[#dedede]" />
          </div>
          <button type="button" className="mx-px mb-px flex h-[30px] w-[60px] items-center justify-center border-2 border-[#1f78bd] bg-[#e1e3e5] text-sm text-black">
            开始
          </button>
        </div>
      </main>
      <div className="flex w-[120px] shrink-0 justify-end">
        <div className="h-[135px] w-6 bg-[#111]" />
      </div>
    </div>
  );
}
